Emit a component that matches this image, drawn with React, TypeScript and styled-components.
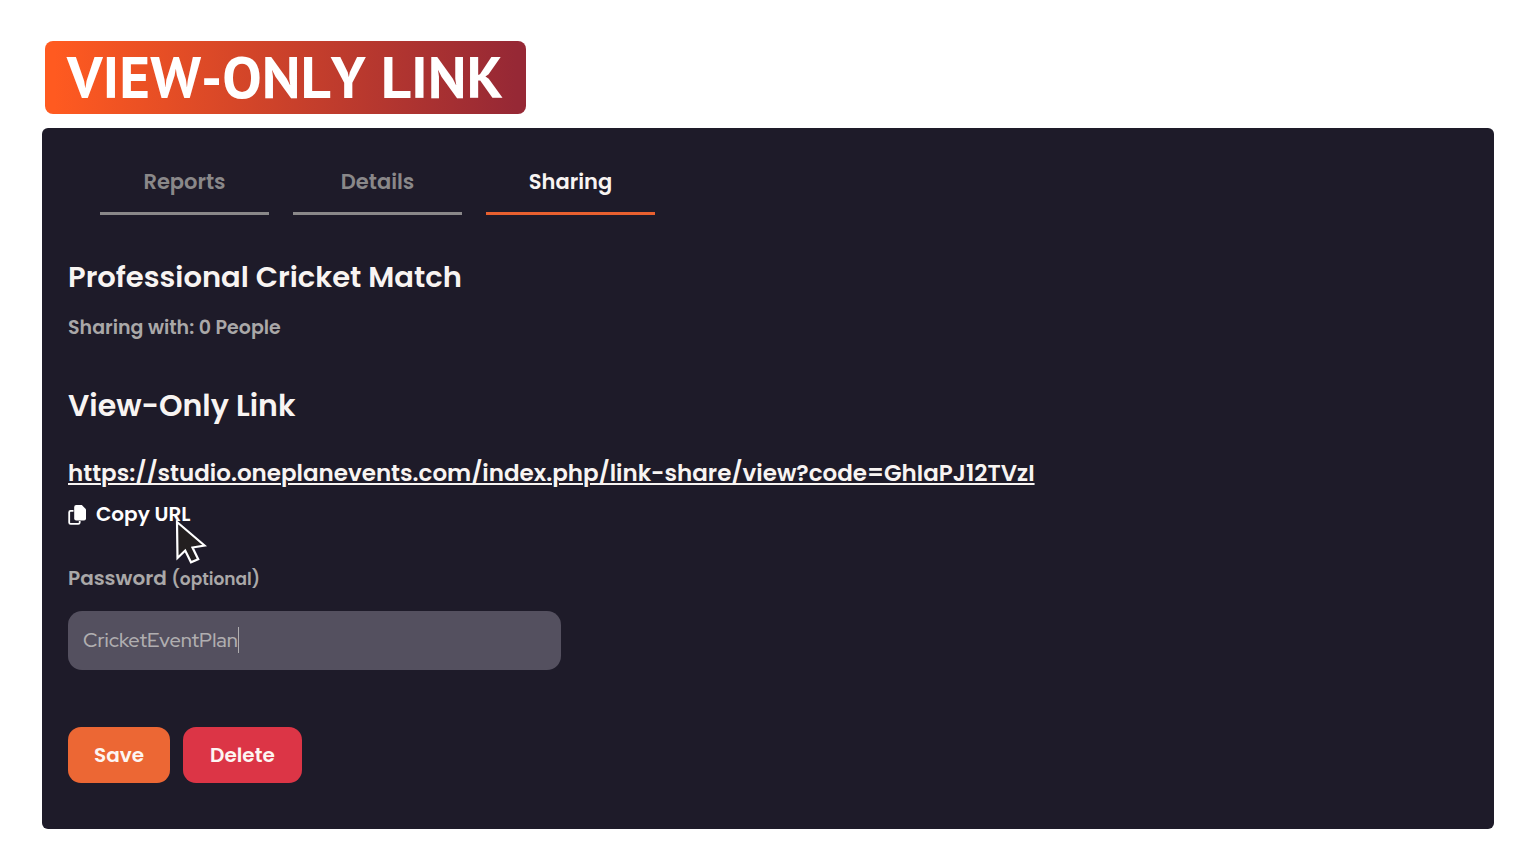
import React, { useState } from "react";
import styled, { createGlobalStyle } from "styled-components";

const GlobalStyle = createGlobalStyle`
  * { box-sizing: border-box; }
  body {
    margin: 0;
    background: #ffffff;
    font-family: Poppins, Inter, sans-serif;
  }
  h1, h2, p { margin: 0; }
  button, input { font-family: inherit; }
`;

const Page = styled.main`
  display: flex;
  flex-direction: column;
  align-items: flex-start;
  gap: 14px;
  padding: 41px 42px 36px;
`;

const Banner = styled.h1`
  margin-left: 3px;
  padding: 0 23px 3px 22px;
  border-radius: 8px;
  background: linear-gradient(90deg, #ff5a20 2%, #962835 98%);
  color: #ffffff;
  font-family: "PT Sans", Roboto, sans-serif;
  font-size: 59px;
  font-weight: 700;
  font-kerning: none;
  line-height: 70px;
  white-space: nowrap;
`;

const Panel = styled.section`
  display: flex;
  flex-direction: column;
  align-items: flex-start;
  align-self: stretch;
  padding: 32px 26px 46px;
  border-radius: 6px;
  background: #1e1b29;
  color: #f8f4f2;
`;

const Tabs = styled.nav`
  display: flex;
  gap: 24px;
  margin-left: 32px;
`;

const Tab = styled.button<{ $active: boolean }>`
  width: 169px;
  height: 55px;
  padding: 0 0 10px;
  border: 0;
  border-bottom: 3px solid ${(p) => (p.$active ? "#e8602f" : "#8a8889")};
  background: none;
  color: ${(p) => (p.$active ? "#f8f4f2" : "#8a8889")};
  font-size: 21px;
  font-weight: 600;
  cursor: pointer;
`;

const Heading = styled.h2<{ $gap: number; $size: number }>`
  margin-top: ${(p) => p.$gap}px;
  font-size: ${(p) => p.$size}px;
  font-weight: 600;
  line-height: 40px;
`;

const Summary = styled.p`
  margin-top: 17px;
  color: #aaa8a8;
  font-size: 19px;
  font-weight: 600;
  line-height: 28px;
`;

const ShareLink = styled.a`
  margin-top: 31px;
  color: inherit;
  font-size: 23px;
  font-weight: 600;
  line-height: 32px;
  text-decoration-thickness: 2px;
  text-underline-offset: 2px;
`;

const CopyButton = styled.button`
  position: relative;
  display: flex;
  align-items: center;
  gap: 10px;
  height: 28px;
  margin-top: 11px;
  padding: 0;
  border: 0;
  background: none;
  color: #ffffff;
  font-size: 20px;
  font-weight: 600;
  cursor: pointer;
`;

const Pointer = styled.svg`
  position: absolute;
  top: 19px;
  left: 106px;
`;

const Label = styled.label`
  margin-top: 36px;
  color: #aaa8a8;
  font-size: 20px;
  font-weight: 600;
  line-height: 28px;
`;

const Hint = styled.span`
  font-size: 17px;
`;

const Field = styled.div`
  position: relative;
  width: 493px;
  max-width: 100%;
  margin-top: 18px;
`;

const TextInput = styled.input`
  display: block;
  width: 100%;
  height: 59px;
  padding: 0 15px 2px;
  border: 0;
  border-radius: 14px;
  outline: 0;
  background: #54505f;
  color: #b0aeb0;
  caret-color: transparent;
  font-family: "Red Hat Display", "Red Hat Text", Metropolis, Montserrat, Lato, sans-serif;
  font-size: 20px;
  font-weight: 500;
`;

const Caret = styled.span`
  position: absolute;
  top: 16px;
  left: 170px;
  width: 1px;
  height: 26px;
  background: #b0aeb0;
`;

const Actions = styled.div`
  display: flex;
  gap: 13px;
  margin-top: 57px;
`;

const ActionButton = styled.button<{ $color: string; $pad: number }>`
  height: 56px;
  padding: 0 ${(p) => p.$pad}px;
  border: 0;
  border-radius: 13px;
  background: ${(p) => p.$color};
  color: #fdf5f2;
  font-size: 20px;
  font-weight: 600;
  cursor: pointer;
`;

const tabNames = ["Reports", "Details", "Sharing"];

const CopyIcon = () => (
  <svg width="18" height="22" viewBox="0 -2 18 22" aria-hidden="true">
    <path
      d="M5.500 5.800H2.600Q1.200 5.800 1.200 7.200v10.200Q1.200 18.900 2.600 18.900h7.600q1.500 0 1.500-1.500V16"
      fill="none"
      stroke="currentColor"
      strokeWidth="1.8"
    />
    <path
      d="M8.200 0h5.600L18 4.200v9.200q0 2-2 2H8.200q-2 0-2-2V2q0-2 2-2Z"
      fill="currentColor"
    />
  </svg>
);

const PointerIcon = () => (
  <Pointer width="34" height="46" viewBox="0 0 34 46" aria-hidden="true">
    <path
      d="M3 3 30.500 26.500 18.500 28.500 24.200 40.300 17 43.300 11.200 31.500 3.500 39Z"
      fill="#231f20"
      stroke="#ffffff"
      strokeWidth="2.200"
    />
  </Pointer>
);

export default function App() {
  const [active, setActive] = useState("Sharing");
  const [password, setPassword] = useState("CricketEventPlan");
  const url =
    "https://studio.oneplanevents.com/index.php/link-share/view?code=GhIaPJ12TVzI";

  return (
    <>
      <GlobalStyle />
      <Page>
        <Banner>VIEW-ONLY LINK</Banner>
        <Panel>
          <Tabs>
            {tabNames.map((name) => (
              <Tab
                key={name}
                type="button"
                $active={name === active}
                onClick={() => setActive(name)}
              >
                {name}
              </Tab>
            ))}
          </Tabs>
          <Heading $gap={42} $size={29}>
            Professional Cricket Match
          </Heading>
          <Summary>Sharing with: 0 People</Summary>
          <Heading $gap={44} $size={30}>
            View-Only Link
          </Heading>
          <ShareLink href={url}>{url}</ShareLink>
          <CopyButton type="button">
            <CopyIcon />
            Copy URL
            <PointerIcon />
          </CopyButton>
          <Label htmlFor="password">
            Password <Hint>(optional)</Hint>
          </Label>
          <Field>
            <TextInput
              id="password"
              type="text"
              value={password}
              onChange={(e) => setPassword(e.target.value)}
            />
            <Caret />
          </Field>
          <Actions>
            <ActionButton type="button" $color="#ec6734" $pad={26}>
              Save
            </ActionButton>
            <ActionButton type="button" $color="#dc3546" $pad={27}>
              Delete
            </ActionButton>
          </Actions>
        </Panel>
      </Page>
    </>
  );
}
